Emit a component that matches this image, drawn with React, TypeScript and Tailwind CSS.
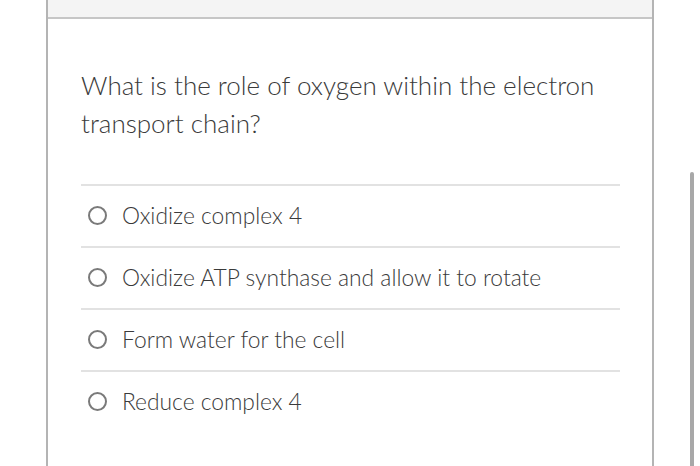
const options = [
  "Oxidize complex 4",
  "Oxidize ATP synthase and allow it to rotate",
  "Form water for the cell",
  "Reduce complex 4",
];

export default function App() {
  return (
    <div
      className="relative w-[700px] h-[466px] overflow-hidden bg-white"
      style={{ fontFamily: "Lato, 'Open Sans', sans-serif" }}
    >
      <div className="ml-[46px] w-[608px] h-[466px] border-x-2 border-[#b4b4b4] flex flex-col">
        {/* header strip */}
        <div className="h-[19px] bg-[#f4f4f4] border-b-2 border-[#c6c6c6]" />

        <div className="pl-[33px] pr-[32px]">
          <h2 className="mt-[47px] text-[26px] leading-[38px] text-[#3a3a3a] font-light">
            What is the role of oxygen within the electron transport chain?
          </h2>

          <div className="mt-[42px]">
            {options.map((opt) => (
              <div
                key={opt}
                className="h-[62px] pb-[3px] border-t-2 border-[#e2e2e2] flex items-center"
              >
                <span className="ml-[7px] mt-[2px] w-[19px] h-[19px] rounded-full border-2 border-[#7a7a7a] shrink-0" />
                <span className="ml-[15px] text-[22.8px] leading-[26px] text-[#3a3a3a] font-light">
                  {opt}
                </span>
              </div>
            ))}
          </div>
        </div>
      </div>

      {/* scrollbar thumb */}
      <div className="absolute left-[690px] top-[172px] w-[4px] h-[300px] rounded-full bg-[#a8a8a8]" />
    </div>
  );
}
